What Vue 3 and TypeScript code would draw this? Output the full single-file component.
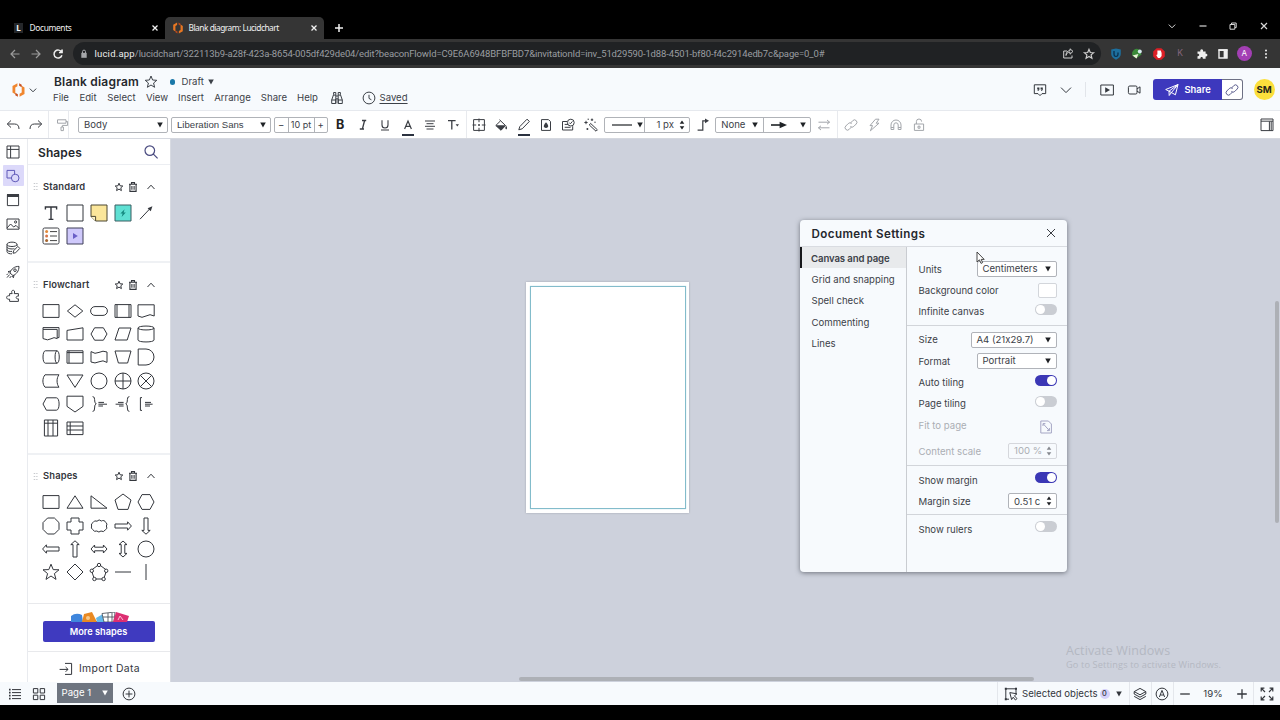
<script setup lang="ts">
import { h } from 'vue'

interface Glyph {
  d?: string
  f?: string
}

const ring = (x: number, y: number, r: number): string =>
  `M${x - r} ${y}a${r} ${r} 0 1 0 ${2 * r} 0a${r} ${r} 0 1 0 ${-2 * r} 0`

// All glyphs are drawn around the origin of a 20 x 20 box.
const glyphs: Record<string, Glyph> = {
  close: { d: 'M-2.5-2.5L2.5 2.5M2.5-2.5L-2.5 2.5' },
  plus: { d: 'M-4 0H4M0-4V4' },
  back: { d: 'M4.5 0H-4M0-4L-4 0L0 4' },
  forward: { d: 'M-4.5 0H4M0-4L4 0L0 4' },
  reload: { d: 'M3.6-1.8A4 4 0 1 0 3.9 1.2M4-4.4V-1.4H1', f: 'M4.4-4.6V-1H.8z' },
  padlock: { d: 'M-1.5-1V-2.4a1.5 1.5 0 0 1 3 0V-1', f: 'M-2.7-1.2H2.7V3.8H-2.7z' },
  shareOut: { d: 'M-1-3H-4.3V4H4V1.5M-2 1.5C-1.5-1 0-1.8 2-1.8V.2L5-2.6L2-5.2V-3.4C-1-3.2-2-1-2 1.5z' },
  star: { d: 'M0-4.6L1.3-1.5L4.6-1.3L2.1.9L2.9 4.2L0 2.4L-2.9 4.2L-2.1.9L-4.6-1.3L-1.3-1.5z' },
  bigStar: { d: 'M0-6L1.6-2L5.8-1.7L2.6 1L3.6 5.3L0 3L-3.6 5.3L-2.6 1L-5.8-1.7L-1.6-2z' },
  smallStar: { d: 'M0-3.8L1.1-1.2L3.8-1L1.8.8L2.4 3.6L0 2.1L-2.4 3.6L-1.8.8L-3.8-1L-1.1-1.2z' },
  puzzleSolid: { f: 'M-4.5-2.6H-1.6C-2.4-5.6 1.8-5.6 1-2.6H3.6V-.2C6-.8 6 3 3.6 2.4V4.8H.8C1.3 2.4-2 2.4-1.6 4.8H-4.5V2.2C-2.2 2.6-2.2-.6-4.5-.2z' },
  panelSolid: { d: 'M-4-4H4V4H-4z', f: 'M.6-4H4.2V4H.6zM-4.5-4.8H4.5V-3H-4.5z' },
  menuDots: { f: ring(0, -3.6, 1) + ring(0, 0, 1) + ring(0, 3.6, 1) },
  winMin: { d: 'M-3.5 0H3.5' },
  winRestore: { d: 'M-3-1.5H1.8V3.2H-3zM-1.5-1.7V-3H3.2V1.6H2' },
  winClose: { d: 'M-3-3L3 3M3-3L-3 3' },
  dialogClose: { d: 'M-4-4L4 4M4-4L-4 4' },
  chevDown: { d: 'M-3.2-1.4L0 1.8L3.2-1.4' },
  chevWide: { d: 'M-5-2.4L0 2.6L5-2.4' },
  chevUp: { d: 'M-3.5 2L0-1.8L3.5 2' },
  binoculars: { d: 'M-1-2H1M-1 .8H1M-1.2 5.5V-5.5H-3.4V-3.5L-5.3 2V5.5H-1.2V1M1.2 5.5V-5.5H3.4V-3.5L5.3 2V5.5H1.2V1M-5.3 2H-1.2M5.3 2H1.2M-3.6-2.9H-1.2M3.6-2.9H1.2' },
  clock: { d: ring(0, 0, 5.9) + 'M0-3.2V.4L2.4 1.8' },
  comment: { d: 'M-5.7-5.2H5.7V3.6H2L0 5.6L-2 3.6H-5.7z', f: 'M-2.8-2.6H-.6V-.6Q-.6.8-2.4 1.1V.3Q-1.6 0-1.6-.6H-2.8zM.6-2.6H2.8V-.6Q2.8.8 1 1.1V.3Q1.8 0 1.8-.6H.6z' },
  present: { d: 'M-6.2-5H6.4V5H-6.2z', f: 'M-1.8-2.8L3 0L-1.8 2.8z' },
  video: { d: 'M-4.2-4H1.8Q3-4 3-2.8V2.8Q3 4 1.8 4H-4.2Q-5.6 4-5.6 2.6V-2.6Q-5.6-4-4.2-4zM3-1L6-3.2V3.2L3 1' },
  plane: { d: 'M6-5.5L-6.3-.5L-3 1.2L3.4 4.8zM6-5.5L-3 1.2L-2.8 5.5L-.6 2.6M6-5.5L-.6 2.6' },
  link: { d: 'M-.4-2L1.8-4.4A2.4 2.4 0 0 1 5.2-1L2.8 1.4A2.4 2.4 0 0 1-.6 1.4M.4 2L-1.8 4.4A2.4 2.4 0 0 1-5.2 1L-2.8-1.4A2.4 2.4 0 0 1 .6-1.4' },
  undo: { d: 'M-2-4.5L-5.7-1L-2 2.5M-5.7-1H1.5Q6-1 6 4' },
  redo: { d: 'M2-4.5L5.7-1L2 2.5M5.7-1H-1.5Q-6-1-6 4' },
  roller: { d: 'M-4.5-5.2H4V-1.8H-4.5zM4-3.5H5.6V.4H.4V2M-1 2H1.4V5.6H-1z' },
  italic: { d: 'M-1-4.5H3.2M-3.2 4H1M1.6-4.5L-.6 4' },
  underline: { d: 'M-3-4.8V0A3 3 0 0 0 3 0V-4.8M-4 5H4' },
  fontColor: { d: 'M-3.4 4L0-4L3.4 4M-2.3 1.4H2.3' },
  align: { d: 'M-5-4H5M-3.5-1.3H3.5M-5 1.3H5M-3.5 4H3.5' },
  textMore: { d: 'M-5-4.3H2.6M-1.2-4.3V4.6', f: 'M2.6-.8H6L4.3 1.4z' },
  frame: { d: 'M-5.4-5.4H5.4V5.4H-5.4zM0-6.5V-2.8M0 6.5V2.8M-6.5 0H-2.8M6.5 0H2.8M-1 0H1M0-1V1' },
  bucket: { d: 'M-5.2.5L-.4-4.2L4.6.6L0 5.2zM-.4-4.2L-1.4-5.4', f: 'M-5.4.2H4.8L0 5.4zM5.2.8Q7 3.4 5.2 4.4Q3.4 3.4 5.2.8z' },
  pen: { d: 'M-5.2 4.8L-4.2 1.6L3-5.8L5.4-3.6L-1.8 3.8z' },
  drop: { d: 'M-4-5.4H2.5L4.5-3.4V5.4H-4.5V-5.4z', f: 'M0-2.8Q3 .6 2 2Q0 4-2 2Q-3 .6 0-2.8z' },
  card: { d: 'M-1-3.5H-5.5V5H4.7V1.2M-3.3-.6H0M-3.3 2.3H2.6' + ring(2.8, -2.4, 3.4) + 'M1.3-2.4L2.4-1.2L4.4-3.6' },
  wand: { d: 'M-1.7 0L5 6.2L6.4 4.8L-.4-1.6zM-5-4.2V-.8M-6.6-2.5H-3.4M1-6.5V-4M-.2-5.2H2.2M-2.8-6.4V-5M-3.6 3V5M-4.6 4H-2.6M4-3.4V-2' },
  elbow: { d: 'M-5.4 5.2H-.2V-4.2H4', f: 'M2-6.6L6-4.2L2-1.8z' },
  line: { d: 'M-10 0H10' },
  arrowRight: { d: 'M-8 0H2', f: 'M.6-3.2L8 0L.6 3.2z' },
  swap: { d: 'M-5.5-2.8H5.5M3-5L5.6-2.8L3-.8M5.5 2.8H-5.5M-3 .8L-5.6 2.8L-3 5' },
  bolt: { d: 'M1.5-5.8H5L2.2-1.8H5L-3.6 5.8L-1.5.6H-4z' },
  magnet: { d: 'M-5 4.5V0A5 5 0 0 1 5 0V4.5H2.2V0A2.2 2.2 0 0 0-2.2 0V4.5zM-5 2.5H-2.2M5 2.5H2.2' },
  lock: { d: 'M-4.6-1H4.6V5.4H-4.6zM-2.6-1V-3.4A2.6 2.6 0 0 1 2.6-3.4M-1 1.2H1V3.2H-1z' },
  dockRight: { d: 'M-6-6H6V5.6H-6zM2.4-3.6V5.6M4.2-3.6V5.6M-6-3.8H6' },
  layout: { d: 'M-6-6H6V6H-6zM-6-2.6H6M-2.4-6V6' },
  shapes: { d: 'M-2 2H-6V-5.6H1.6V-2' + ring(2.2, 2, 3.8) },
  container: { d: 'M-5.6-5.4H5.6V5.6H-5.6z', f: 'M-6-6H6V-3H-6z' },
  image: { d: 'M-6-5H6V5.2H-6zM-6 4L-2.4 0L.6 3L3 1.4L6 4.4' + ring(2.6, -2, 1.1) },
  database: { d: 'M-6-3.6C-6-6.6 4-6.6 4-3.6C4-.8-6-.8-6-3.6V3.6C-6 5.4-3 6-1 5.8M4-3.6V-2M-6-1.2C-6 .8-1 1.4 1.4.6M-6 1.4C-6 3.4-3 3.6-1 3.4M0 5.2L.6 2.8L4.8-1.6L6.8.4L2.6 4.8z' },
  rocket: { d: 'M-3 1C-2-3 1.6-5.8 6-5.6C6-1 3.6 2 0 3.6zM-2-1L-5-.4L-3.4 1M1 3L.4 5.8L-.6 4M-3.4 2.6L-6 5.6M-1.6 4L-3.4 6M-5 1.6L-6.4 3' + ring(2, -1.8, 1.3) },
  puzzle: { d: 'M-3.4-2.4H-.8C-3.2-6.8 3.4-6.8 1.2-2.4H5.4V.2C2.4-.4 2.4 3.4 5.4 2.8V5.4H-3.4V3.2C-7.4 4-7.4-1-3.4-.2z' },
  search: { d: ring(-1.2, -1.4, 4.8) + 'M2.4 2.2L6.6 6.4' },
  trash: { d: 'M-4-2.8H4M-3.1-2.8V4.4H3.1V-2.8M-1.5-2.8V-4.4H1.5V-2.8M-1.1-1V2.8M1.1-1V2.8' },
  importData: { d: 'M-6.4.4H2M-.4-2L2 .4L-.4 2.8M-1-5.6H5.6V5.4H-1' },
  list: { d: 'M-3-4.4H6M-3-1.4H6M-3 1.6H6M-3 4.6H6', f: 'M-6-5.2H-4.4V-3.6H-6zM-6-2.2H-4.4V-.6H-6zM-6 .8H-4.4V2.4H-6zM-6 3.8H-4.4V5.4H-6z' },
  grid: { d: 'M-5.6-5.4H-1.2V-1H-5.6zM1.2-5.4H5.6V-1H1.2zM-5.6 1.2H-1.2V5.6H-5.6zM1.2 1.2H5.6V5.6H1.2z' },
  addPage: { d: ring(0, 0, 5.9) + 'M-3.4 0H3.4M0-3.4V3.4' },
  selection: { d: 'M5-1V-5.2H-5.2V5.2H-2M-1.2-1.4L6-.2L3.4 1.8L6 4.6L4.4 6L2.2 3.2L.6 5.6z', f: 'M-6.2-6.2H-4.2V-4.2H-6.2zM4-6.2H6V-4.2H4zM-6.2 4.2H-4.2V6.2H-6.2z' },
  layers: { d: 'M0-5.6L5.8-2.4L0 .8L-5.8-2.4zM-5.8 0L0 3.2L5.8 0M-5.8 2.4L0 5.6L5.8 2.4M-5.8-2.4V0M5.8-2.4V0' },
  accessible: { d: ring(0, 0, 5.9) + 'M-2.6 3L0-3.6L2.6 3M-1.7 1H1.7' },
  minus: { d: 'M-4.8 0H4.8' },
  zoomIn: { d: 'M-4.8 0H4.8M0-4.8V4.8' },
  expand: { d: 'M-2-2L-5.8-5.8M-5.8-2.6V-5.8H-2.6M2-2L5.8-5.8M5.8-2.6V-5.8H2.6M-2 2L-5.8 5.8M-5.8 2.6V5.8H-2.6M2 2L5.8 5.8M5.8 2.6V5.8H2.6' },
  fitPage: { d: 'M-5.2-6H2.4L5.4-3V6H-5.2zM-2.6-3L3.2 3.4M-3-1V-3.4H-.6M3.4 1V3.6H1' },
  caret: { f: 'M-2.8-2.4H2.8L0 2.4z' },
  spinner: { f: 'M-2.3-1.2L0-4.4L2.3-1.2zM-2.3 1.2H2.3L0 4.4z' },
  // standard library
  text: { d: 'M-5.6-3.4V-6H5.6V-3.4M0-6V6.4M-2.4 6.4H2.4' },
  box: { d: 'M-8-8H8V8H-8z' },
  diagonal: { d: 'M-6 6.2L4-4.4', f: 'M6.4-6.8L4.8-1.8L1.6-4.8z' },
  // flowchart library
  process: { d: 'M-8-6.4H8V6.4H-8z' },
  decision: { d: 'M-7.6 0L0-6.2L7.8 0L0 6.2z' },
  terminator: { d: 'M-4-4.4H4A4.4 4.4 0 0 1 4 4.4H-4A4.4 4.4 0 0 1-4-4.4z' },
  predefined: { d: 'M-8-6.4H8V6.4H-8zM-6-6.4V6.4M6-6.4V6.4' },
  document: { d: 'M-8-6.2H8.2V5Q4 2.4 0 5T-8 5z' },
  documents: { d: 'M-8-4.6H6.2V4.6Q3 2.6 0 4.8T-8 4.6zM-8-4.6V-6.4H8V3.6H6.4' },
  manualInput: { d: 'M-8-3.6L8-6.2V6H-8z' },
  hexagon: { d: 'M-8 0L-4.4-6.2H4.4L8 0L4.4 6.2H-4.4z' },
  data: { d: 'M-4-6H8L4.2 6H-8z' },
  cylinder: { d: 'M-8-6C-8-8.6 8-8.6 8-6V6C8 8.6-8 8.6-8 6zM-8-6C-8-3.4 8-3.4 8-6' },
  directData: { d: 'M-5.6-6.2H6C9-6.2 9 6.2 6 6.2H-5.6C-8.8 6.2-8.8-6.2-5.6-6.2M6-6.2C3.4-6.2 3.4 6.2 6 6.2' },
  storage: { d: 'M-8-6.2H8V6.2H-8zM-6-6.2V6.2M-8-4.4H8' },
  tape: { d: 'M-8-5.4Q-4-2.4 0-4.6T8-5V5.4Q4 2.6 0 4.8T-8 5z' },
  manualOp: { d: 'M-8-6H8L4.6 6H-4.6z' },
  delay: { d: 'M-7.8-8H0A8 8 0 0 1 0 8H-7.8z' },
  stored: { d: 'M-6-6.2H8C5.4-3 5.4 3 8 6.2H-6C-8.8 3-8.8-3-6-6.2z' },
  merge: { d: 'M-8-6H8L0 6.4z' },
  circle: { d: ring(0, 0, 8) },
  orGate: { d: ring(0, 0, 8) + 'M-8 0H8M0-8V8' },
  junction: { d: ring(0, 0, 8) + 'M-5.6-5.6L5.6 5.6M5.6-5.6L-5.6 5.6' },
  display: { d: 'M-4.6-6.2H5.4C9-6.2 9 6.2 5.4 6.2H-4.6L-8 0z' },
  offPage: { d: 'M-8-7.8H8V2.4L0 8L-8 2.4z' },
  braceRight: { d: 'M-6.4-7.4Q-4.2-7.4-4.4-4.4T-2.8 0Q-4.6.4-4.4 4T-6.4 7.4M-.6-1.6H5M-.6.2H8M-.6 2H4' },
  braceLeft: { d: 'M6.4-7.4Q4.2-7.4 4.4-4.4T2.8 0Q4.6.4 4.4 4T6.4 7.4M.6-1.6H-5M.6.2H-7.4M.6 2H-4' },
  bracket: { d: 'M-4-6.4H-5.6V6.4H-4M-1-1.6H5M-1 .2H6.6M-1 2H4' },
  tableCols: { d: 'M-6.6-8H6.6V8H-6.6zM-6.6-4.8H6.6M-3-8V8M2-8V8' },
  tableRows: { d: 'M-8-6H8V6.6H-8zM-4.8-6V6.6M-8-2H8M-8 2H8' },
  // geometric library
  triangle: { d: 'M0-6.2L8 6.2H-8z' },
  rightTriangle: { d: 'M-8-6.2V6.2H8z' },
  pentagon: { d: 'M0-8L8-2L5 7.4H-5L-8-2z' },
  hexagonTall: { d: 'M-8 0L-4-7.4H4L8 0L4 7.4H-4z' },
  octagon: { d: 'M-3.4-8H3.4L8-3.4V3.4L3.4 8H-3.4L-8 3.4V-3.4z' },
  cross: { d: 'M-4-8H4V-4H8V4H4V8H-4V4H-8V-4H-4z' },
  cloud: { d: 'M-6-3.4A3 3 0 0 1-2-4.8A3 3 0 0 1 2.4-5A3 3 0 0 1 6.8-3.6A2.6 2.6 0 0 1 7.4 0A2.8 2.8 0 0 1 6.2 4A3 3 0 0 1 2 5A3 3 0 0 1-2.2 5A3 3 0 0 1-6.2 3.6A2.8 2.8 0 0 1-7.4 0A2.6 2.6 0 0 1-6-3.4z' },
  blockRight: { d: 'M-8-2H4.6V-4.2L8.4 0L4.6 4.2V2H-8z' },
  blockLeft: { d: 'M8-2H-4.6V-4.2L-8.4 0L-4.6 4.2V2H8z' },
  blockDown: { d: 'M-2-8H2V4.4H4.2L0 8.2L-4.2 4.4H-2z' },
  blockUp: { d: 'M-2 8H2V-4.4H4.2L0-8.2L-4.2-4.4H-2z' },
  blockH: { d: 'M-8 0L-4.4-4V-1.8H4.4V-4L8 0L4.4 4V1.8H-4.4V4z' },
  blockV: { d: 'M0-8L-4-4.4H-1.8V4.4H-4L0 8L4 4.4H1.8V-4.4H4z' },
  starShape: { d: 'M0-7.8L2.2-2.4L8-2.2L3.4 1.6L5 7.4L0 4L-5 7.4L-3.4 1.6L-8-2.2L-2.2-2.4z' },
  diamond: { d: 'M0-8L8 0L0 8L-8 0z' },
  nodes: { d: 'M-1.5-6.4L-6.6-2.6M1.5-6.4L6.6-2.6M-7 .2L-5.2 5.4M7 .2L5.2 5.4M-3 7H3' + ring(0, -7, 1.7) + ring(-7.2, -1.2, 1.7) + ring(7.2, -1.2, 1.7) + ring(-4.6, 7, 1.7) + ring(4.6, 7, 1.7) },
  hLine: { d: 'M-8 0H8' },
  vLine: { d: 'M0-8V8' },
}

const Icon = (props: { name: string; w?: number }) =>
  h('svg', { viewBox: '-10 -10 20 20', width: 20, height: 20, overflow: 'visible', 'aria-hidden': 'true' }, [
    h('path', { d: glyphs[props.name].d ?? '', fill: 'none', stroke: 'currentColor', 'stroke-width': props.w ?? 1 }),
    h('path', { d: glyphs[props.name].f ?? '', fill: 'currentColor' }),
  ])
Icon.props = ['name', 'w']

const menus = [
  { label: 'File', width: 25 },
  { label: 'Edit', width: 29 },
  { label: 'Select', width: 38 },
  { label: 'View', width: 33 },
  { label: 'Insert', width: 35 },
  { label: 'Arrange', width: 48 },
  { label: 'Share', width: 35 },
  { label: 'Help', width: 32 },
]
const rail = ['layout', 'shapes', 'container', 'image', 'database', 'rocket', 'puzzle']
const flowchart = [
  'process', 'decision', 'terminator', 'predefined', 'document',
  'documents', 'manualInput', 'hexagon', 'data', 'cylinder',
  'directData', 'storage', 'tape', 'manualOp', 'delay',
  'stored', 'merge', 'circle', 'orGate', 'junction',
  'display', 'offPage', 'braceRight', 'braceLeft', 'bracket',
  'tableCols', 'tableRows',
]
const geometric = [
  'process', 'triangle', 'rightTriangle', 'pentagon', 'hexagonTall',
  'octagon', 'cross', 'cloud', 'blockRight', 'blockDown',
  'blockLeft', 'blockUp', 'blockH', 'blockV', 'circle',
  'starShape', 'diamond', 'nodes', 'hLine', 'vLine',
]
const libraries = [
  { title: 'Standard', key: 'standard', shapes: [] as string[] },
  { title: 'Flowchart', key: 'flowchart', shapes: flowchart },
  { title: 'Shapes', key: 'geometric', shapes: geometric },
]
const settingsTabs = ['Canvas and page', 'Grid and snapping', 'Spell check', 'Commenting', 'Lines']

type Control = 'select' | 'wide' | 'swatch' | 'off' | 'on' | 'fit' | 'number'
interface Setting {
  label: string
  control: Control
  value?: string
  muted?: boolean
  spaced?: boolean
}
const settings: Setting[][] = [
  [
    { label: 'Units', control: 'select', value: 'Centimeters' },
    { label: 'Background color', control: 'swatch' },
    { label: 'Infinite canvas', control: 'off' },
  ],
  [
    { label: 'Size', control: 'wide', value: 'A4 (21x29.7)' },
    { label: 'Format', control: 'select', value: 'Portrait' },
    { label: 'Auto tiling', control: 'on' },
    { label: 'Page tiling', control: 'off' },
    { label: 'Fit to page', control: 'fit', muted: true },
    { label: 'Content scale', control: 'number', value: '100 %', muted: true, spaced: true },
  ],
  [
    { label: 'Show margin', control: 'on' },
    { label: 'Margin size', control: 'number', value: '0.51 c' },
  ],
  [{ label: 'Show rulers', control: 'off' }],
]
</script>

<template>
  <div class="screen">
    <div class="tabstrip">
      <div class="tab">
        <span class="fav-doc">L</span>
        <span class="tab-title">Documents</span>
        <Icon name="close" :w="1.3" />
      </div>
      <div class="tab active">
        <svg class="logo small" viewBox="0 0 14 14"><path d="M6 .6L1.4 3.2V9.4L4 11V4.6L6 3.4zM8 13.4L12.6 10.8V4.6L10 3V9.4L8 10.6z" fill="#e87722" /><path d="M7.6 .6L10 2V4.4L7.6 3zM6.4 13.4L4 12V9.6L6.4 11z" fill="#b9481c" /></svg>
        <span class="tab-title">Blank diagram: Lucidchart</span>
        <Icon name="close" :w="1.3" />
      </div>
      <Icon name="plus" :w="1.5" class="new-tab" />
      <div class="window-buttons">
        <Icon name="chevDown" /><Icon name="winMin" :w="1.2" /><Icon name="winRestore" /><Icon name="winClose" :w="1.2" />
      </div>
    </div>

    <div class="addressbar">
      <div class="nav-buttons">
        <Icon name="back" class="dim" :w="1.2" /><Icon name="forward" class="dim" :w="1.2" /><Icon name="reload" :w="1.5" />
      </div>
      <div class="url">
        <Icon name="padlock" class="pad" />
        <span class="url-text"><b>lucid.app</b>/lucidchart/322113b9-a28f-423a-8654-005df429de04/edit?beaconFlowId=C9E6A6948BFBFBD7&amp;invitationId=inv_51d29590-1d88-4501-bf80-f4c2914edb7c&amp;page=0_0#</span>
        <span class="url-actions"><Icon name="shareOut" /><Icon name="star" :w="1.2" /></span>
      </div>
      <div class="extensions">
        <svg viewBox="-10 -10 20 20"><path d="M0-5.4L4.8-4.4V0Q4.6 3.6 0 5.8Q-4.6 3.6-4.8 0V-4.4z" fill="#1d6f9e" /><path d="M-2-3V0Q-2 2.4 0 2.4T2 0V-1.4" fill="none" stroke="#0b2f4d" stroke-width="1.3" /></svg>
        <svg viewBox="-10 -10 20 20"><path d="M-5 1A5 5 0 0 1 2-4.6L4.6.4L-1 4.6z" fill="#3b8a3a" /><path d="M-4.6 1.4L1.4 0L-.4 4.6z" fill="#e9f3d8" /><circle cx="2.8" cy="-2.4" r="2" fill="#d7ebf0" /></svg>
        <svg viewBox="-10 -10 20 20"><path d="M-2.4-5.8H2.4L5.8-2.4V2.4L2.4 5.8H-2.4L-5.8 2.4V-2.4z" fill="#dc1f26" /><path d="M-1.6-3.6H1.8L2.6-1V2L1 4H-1L-2.8 1L-1.6 .4z" fill="#fff" /></svg>
        <span class="ext-k">K</span>
        <Icon name="puzzleSolid" /><Icon name="panelSolid" :w="1.4" />
        <span class="profile">A</span>
        <Icon name="menuDots" />
      </div>
    </div>

    <header class="header">
      <div class="brand">
        <svg class="logo" viewBox="0 0 14 14"><path d="M6 .6L1.4 3.2V9.4L4 11V4.6L6 3.4zM8 13.4L12.6 10.8V4.6L10 3V9.4L8 10.6z" fill="#f0862f" /><path d="M7.6 .6L10 2V4.4L7.6 3zM6.4 13.4L4 12V9.6L6.4 11z" fill="#c8511f" /></svg>
        <Icon name="chevDown" />
      </div>
      <div class="doc">
        <div class="title-row">
          <h1>Blank diagram</h1>
          <Icon name="bigStar" />
          <i class="status-dot"></i>
          <span class="draft">Draft</span>
          <Icon name="caret" class="draft-caret" />
        </div>
        <nav class="menu-row">
          <span v-for="m in menus" :key="m.label" class="menu" :style="{ width: m.width + 'px' }">{{ m.label }}</span>
          <Icon name="binoculars" class="binoc" />
          <Icon name="clock" class="clock" />
          <span class="saved">Saved</span>
        </nav>
      </div>
      <div class="header-actions">
        <Icon name="comment" /><Icon name="chevWide" class="chev" />
        <i class="vline"></i>
        <Icon name="present" /><Icon name="video" class="video" />
        <div class="share"><Icon name="plane" /><span>Share</span></div>
        <div class="share-link"><Icon name="link" /></div>
        <span class="avatar">SM</span>
      </div>
    </header>

    <div class="toolbar">
      <div class="group g-undo"><Icon name="undo" class="slot" /><Icon name="redo" class="slot" /></div>
      <div class="group g-paint"><Icon name="roller" class="faded" /></div>
      <div class="group g-text">
        <div class="field f-body"><span>Body</span><Icon name="caret" /></div>
        <div class="field f-font"><span>Liberation Sans</span><Icon name="caret" /></div>
        <div class="field f-size"><span>−</span><span class="size">10 pt</span><span>+</span></div>
        <b class="cell bold">B</b>
        <span class="cell"><Icon name="italic" :w="1.3" /></span>
        <span class="cell"><Icon name="underline" :w="1.1" /></span>
        <span class="cell swatched"><Icon name="fontColor" :w="1.2" /></span>
        <span class="cell"><Icon name="align" /></span>
        <span class="cell"><Icon name="textMore" :w="1.3" /></span>
      </div>
      <div class="group g-style">
        <span class="cell"><Icon name="frame" /></span>
        <span class="cell"><Icon name="bucket" /></span>
        <span class="cell swatched"><Icon name="pen" /></span>
        <span class="cell"><Icon name="drop" /></span>
        <span class="cell"><Icon name="card" /></span>
        <span class="cell"><Icon name="wand" /></span>
        <div class="field f-line">
          <span class="part line-style"><Icon name="line" :w="1.2" /><Icon name="caret" class="mini" /></span>
          <span class="part line-width"><span>1 px</span><Icon name="spinner" /></span>
        </div>
        <span class="cell elbow"><Icon name="elbow" :w="1.2" /></span>
        <div class="field f-ends">
          <span class="part none"><span>None</span><Icon name="caret" /></span>
          <span class="part arrow"><Icon name="arrowRight" :w="1.6" /><Icon name="caret" /></span>
        </div>
        <span class="cell swap faded"><Icon name="swap" /></span>
      </div>
      <div class="group g-lock faded">
        <span class="cell"><Icon name="link" /></span>
        <span class="cell"><Icon name="bolt" /></span>
        <span class="cell"><Icon name="magnet" /></span>
        <span class="cell"><Icon name="lock" /></span>
      </div>
      <Icon name="dockRight" class="dock" />
    </div>

    <main class="workspace">
      <aside class="rail">
        <span v-for="r in rail" :key="r" class="rail-item" :class="{ current: r === 'shapes' }"><Icon :name="r" /></span>
      </aside>

      <aside class="panel">
        <div class="panel-head"><h2>Shapes</h2><Icon name="search" :w="1.2" /></div>
        <section v-for="lib in libraries" :key="lib.key" class="library" :class="lib.key">
          <div class="lib-head">
            <i class="grip"></i>
            <h3>{{ lib.title }}</h3>
            <Icon name="smallStar" /><Icon name="trash" class="bin" :w="1.1" /><Icon name="chevUp" class="fold" />
          </div>
          <div class="shape-grid">
            <template v-if="lib.key === 'standard'">
              <Icon name="text" :w="1.4" />
              <Icon name="box" />
              <svg viewBox="-10 -10 20 20"><path d="M-8-8H8V8H-3.4L-8 3.4z" fill="#fbe69a" stroke="#4b4632" /><path d="M-8 3.4H-3.4V8" fill="#fff6c9" stroke="#4b4632" /></svg>
              <svg viewBox="-10 -10 20 20"><path d="M-8-8H8V8H-8z" fill="#5fe0d3" stroke="#3a5f63" /><path d="M1.6-3.8L-2.6.6H-.4L-1.4 4L2.8-.6H.6z" fill="#14877e" /></svg>
              <Icon name="diagonal" />
              <svg viewBox="-10 -10 20 20"><rect x="-8" y="-8" width="16" height="16" rx="1.6" fill="#fff" stroke="#3f4147" /><path d="M-1-4.4H6M-1 0H6M-1 4.6H6" stroke="#444" /><circle cx="-4.4" cy="-4.4" r="1.5" fill="#e28a3c" /><circle cx="-4.4" cy="0" r="1.5" fill="#d9764a" /><circle cx="-4.4" cy="4.6" r="1.5" fill="#a7662f" /></svg>
              <svg viewBox="-10 -10 20 20"><path d="M-8-8H8V8H-8z" fill="#cfc9fb" stroke="#3f3f58" /><path d="M-2-3L2.8 0L-2 3z" fill="#6a5fc7" /></svg>
            </template>
            <Icon v-for="(s, i) in lib.shapes" :key="i" :name="s" />
          </div>
        </section>
        <div class="more">
          <svg class="more-art" viewBox="0 0 60 10"><path d="M1 4Q6 0 12 3L13 10H1z" fill="#3f86dd" /><path d="M14 2L22 0L27 10H12z" fill="#e98a23" /><circle cx="18" cy="6" r="2" fill="#f7c98b" /><path d="M26 6L33 2L35 10H27z" fill="#62b8ea" /><path d="M32 1.5L45 0L44 10H34zM33 5H44M38 1V10M42 1V10" fill="#fff" stroke="#3d4652" stroke-width=".8" /><path d="M46 0L59 4L57 10H43z" fill="#dc2f72" /><path d="M48 8L50 4L53 8" fill="none" stroke="#fbc0d6" /></svg>
          <button>More shapes</button>
        </div>
        <div class="import"><Icon name="importData" /><span>Import Data</span></div>
      </aside>

      <section class="canvas">
        <div class="page"><div class="margin"></div></div>
        <div class="watermark"><p>Activate Windows</p><small>Go to Settings to activate Windows.</small></div>
        <i class="scroll-h"></i><i class="scroll-v"></i>

        <div class="dialog">
          <div class="dialog-head"><h2>Document Settings</h2><Icon name="dialogClose" class="dialog-close" /></div>
          <div class="dialog-body">
            <div class="dialog-tabs">
              <span v-for="(t, i) in settingsTabs" :key="t" :class="{ selected: i === 0 }">{{ t }}</span>
            </div>
            <div class="dialog-main">
              <div v-for="(block, b) in settings" :key="b" class="block">
                <div v-for="s in block" :key="s.label" class="row" :class="{ muted: s.muted, spaced: s.spaced }">
                  <label>{{ s.label }}</label>
                  <span v-if="s.control === 'select' || s.control === 'wide'" class="drop" :class="s.control"><em>{{ s.value }}</em><Icon name="caret" /></span>
                  <span v-else-if="s.control === 'number'" class="drop number"><em>{{ s.value }}</em><Icon name="spinner" /></span>
                  <span v-else-if="s.control === 'swatch'" class="swatch"></span>
                  <Icon v-else-if="s.control === 'fit'" name="fitPage" class="fit" />
                  <span v-else class="toggle" :class="s.control"><i></i></span>
                </div>
              </div>
            </div>
          </div>
        </div>
        <svg class="cursor" viewBox="0 0 10 14"><path d="M1 1V11L3.4 8.8L5 12.4L6.6 11.6L5.2 8.4H8.2z" fill="#fff" stroke="#333" stroke-width=".9" /></svg>
      </section>
    </main>

    <footer class="footer">
      <Icon name="list" class="f-list" /><Icon name="grid" class="f-grid" />
      <div class="page-tab"><span>Page 1</span><Icon name="caret" /></div>
      <Icon name="addPage" class="f-add" />
      <div class="foot-right">
        <div class="seg s-sel"><Icon name="selection" /><span>Selected objects</span><b>0</b><Icon name="caret" class="sel-caret" /></div>
        <div class="seg s-icon"><Icon name="layers" /></div>
        <div class="seg s-icon"><Icon name="accessible" /></div>
        <div class="seg s-zoom"><Icon name="minus" :w="1.3" /><span>19%</span><Icon name="zoomIn" :w="1.3" /></div>
        <div class="seg s-full"><Icon name="expand" :w="1.2" /></div>
      </div>
    </footer>
  </div>
</template>

<style>
html,
body {
  background: #000;
  overflow: hidden;
}
</style>

<style scoped>
.screen {
  width: 1280px;
  height: 720px;
  background: #000;
  display: flex;
  flex-direction: column;
  overflow: hidden;
  font-family: Inter, "Liberation Sans", sans-serif;
  font-size: 9.6px;
  font-feature-settings: "calt" 0;
  color: #3c4148;
  line-height: 1;
  white-space: nowrap;
}
.screen * { box-sizing: border-box; }
h1, h2, h3, p { margin: 0; }
em { font-style: normal; }
svg { flex: none; display: block; }

/* browser chrome */
.tabstrip {
  flex: none;
  height: 39px;
  padding-top: 17px;
  display: flex;
  color: #f1f1f1;
  font-family: "Noto Sans", sans-serif;
  font-size: 8.4px;
}
.tab { width: 165px; height: 22px; display: flex; align-items: center; padding-left: 14px; }
.tab.active { width: 159px; background: #353535; border-radius: 5px 5px 0 0; padding-left: 7px; }
.tab-title { flex: 1; letter-spacing: -0.45px; }
.tab:first-child > svg { margin-right: 0.5px; }
.tab:first-child .tab-title { letter-spacing: -0.35px; }
.fav-doc { width: 9px; height: 10px; background: #25272a; color: #fff; font-size: 8px; font-weight: 700; text-align: center; line-height: 10px; margin-right: 6.5px; }
.logo { width: 15px; height: 16px; }
.logo.small { width: 12px; height: 12px; margin-right: 4.5px; }
.tab.active .tab-title { letter-spacing: -0.5px; }
.new-tab { margin: 1px 0 0 5px; }
.window-buttons { margin-left: auto; display: flex; gap: 10.6px; padding: 0 6px 0 0; margin-top: -1px; color: #d8d8d8; }
.addressbar { flex: none; height: 29px; background: #353535; display: flex; align-items: center; padding-top: 0; color: #eee; }
.nav-buttons { display: flex; gap: 1.6px; width: 73px; padding-left: 4.5px; }
.dim { color: #9b9b9b; }
.url { width: 1028px; height: 23px; border-radius: 12px; background: #202224; display: flex; align-items: center; font-family: Roboto, sans-serif; }
.pad { color: #a5a7aa; margin-left: 1px; }
.url-text { color: #9a9da1; font-size: 9.5px; letter-spacing: -0.128px; margin-left: 0.5px; }
.url-text b { color: #eceded; font-weight: 400; letter-spacing: 0.2px; }
.url-actions { display: flex; gap: 1.5px; margin-left: auto; margin-right: 2px; color: #cfcfcf; }
.extensions { display: flex; align-items: center; padding-left: 5px; gap: 1.4px; }
.extensions > svg { width: 20px; height: 20px; }
.ext-k { width: 20px; text-align: center; color: #84667e; font-size: 8.6px; }
.profile { width: 15px; height: 15px; margin: 0 2.5px; border-radius: 50%; background: #a33fb4; color: #fff; text-align: center; line-height: 15px; font-size: 8px; }

/* document header */
.header { flex: none; height: 43px; background: #f7fafd; display: flex; border-bottom: 1px solid #e6e9ee; }
.brand { width: 54px; display: flex; align-items: center; padding: 1px 0 0 11px; }
.brand > svg:last-child { margin-left: -3px; }
.doc { display: flex; flex-direction: column; padding-top: 4px; }
.title-row { height: 20px; display: flex; align-items: center; }
h1 { width: 87px; font-size: 12px; font-weight: 600; letter-spacing: 0.2px; color: #25282d; }
.status-dot { width: 5.5px; height: 5.5px; border-radius: 50%; background: #1a78a8; margin: 0 6.5px 0 8.5px; }
.draft { width: 20px; }
.draft-caret { margin-left: -1px; }
.menu-row { height: 12px; display: flex; align-items: center; margin-left: -5.5px; }
.menu { text-align: center; }
.binoc { margin-left: 3px; }
.clock { margin-left: 12px; }
.saved { margin-left: 1px; text-decoration: underline; text-underline-offset: 1.5px; }
.header-actions { margin-left: auto; display: flex; align-items: center; color: #33373d; padding-top: 1px; }
.chev { margin-left: 6.5px; }
.vline { width: 1px; height: 15px; background: #e2e5ea; margin: 0 11px 0 8.5px; }
.video { margin: 0 9px 0 7px; }
.share { width: 69px; height: 21px; background: #3d38bd; border-radius: 3px 0 0 3px; color: #fff; display: flex; align-items: center; padding-left: 9px; font-weight: 600; font-size: 9.4px; }
.share span { margin-left: 3px; }
.share-link { width: 21px; height: 21px; border: 1px solid #6d7084; border-left: 0; border-radius: 0 3px 3px 0; background: #fff; display: grid; place-items: center; color: #5d5f8f; }
.avatar { width: 21px; height: 21px; border-radius: 50%; background: #fbdf3c; color: #26251a; font-size: 9.6px; font-weight: 700; text-align: center; line-height: 21px; margin: 0 5.5px 0 11px; }

/* formatting toolbar */
.toolbar { flex: none; height: 28px; background: #fff; display: flex; align-items: center; border-bottom: 1px solid #d5d8df; color: #3a3d43; }
.group { height: 100%; display: flex; align-items: center; border-right: 1px solid #e8eaee; }
.g-undo { width: 49px; padding-left: 3px; gap: 3px; }
.g-paint { width: 20px; padding-left: 3px; }
.g-text { width: 398px; padding-left: 9px; }
.g-style { width: 371px; padding-left: 1px; }
.g-lock { border-right: 0; padding-left: 2px; }
.faded { color: #a3a6ab; }
.field { height: 16px; border: 1px solid #b0b3b8; border-radius: 2px; display: flex; align-items: center; color: #3c4148; background: #fff; }
.field svg { color: #1f2226; }
.f-body { width: 90px; padding-left: 5px; justify-content: space-between; margin-right: 3px; }
.f-body svg, .f-font svg { margin-right: -3px; }
.f-font { width: 100px; padding-left: 5px; justify-content: space-between; margin-right: 3px; font-family: "Liberation Sans", sans-serif; }
.f-size { width: 54px; margin-right: 1px; }
.f-size span { flex: 1; text-align: center; }
.f-size .size { flex: none; width: 27px; height: 100%; line-height: 14px; border: solid #b0b3b8; border-width: 0 1px; font-size: 9px; }
.cell { width: 22.5px; height: 22px; display: flex; align-items: center; justify-content: center; position: relative; }
.bold { font-size: 12.5px; font-weight: 700; color: #222; padding-top: 1.5px; }
.swatched::after { content: ""; position: absolute; left: 5px; bottom: 0; width: 12px; height: 2px; background: #2b3240; }
.f-line { width: 86px; margin-left: 2.5px; }
.part { display: flex; align-items: center; height: 100%; }
.part + .part { border-left: 1px solid #b0b3b8; }
.line-style { width: 39px; padding-left: 7px; }
.line-style .mini { margin-left: -2px; }
.line-width { padding-left: 11px; }
.line-width svg { margin-left: -2px; }
.elbow { width: 25px; }
.f-ends { width: 96px; }
.none { width: 47px; padding-left: 5px; }
.none svg { margin-left: 0; }
.arrow { padding-left: 5px; }
.arrow svg:last-child { margin-left: 4px; }
.swap { width: 26px; }
.dock { margin: 0 3.5px 0 auto; }

/* workspace */
.workspace { flex: none; height: 543px; display: flex; }
.rail { width: 28px; background: #fff; border-right: 1.5px solid #e9ebef; padding-top: 2px; color: #3a3d43; }
.rail-item { width: 21px; height: 21px; margin: 0 0 3px 2.5px; display: grid; place-items: center; border-radius: 1px; }
.rail-item.current { background: #dcd9fa; color: #5f59b8; }
.panel { width: 143px; background: #fff; border-right: 1px solid #d8dbe2; display: flex; flex-direction: column; color: #33363c; }
.panel-head { flex: none; height: 26px; display: flex; align-items: center; justify-content: space-between; padding: 2px 9px 0 10px; border-bottom: 1px solid #eceef2; }
.panel-head svg { color: #4a4b80; margin-top: -1px; }
h2 { font-size: 12px; font-weight: 600; color: #25282d; letter-spacing: 0.1px; }
.library { flex: none; border-bottom: 2px solid #eff1f4; padding-top: 11px; }
.library.standard { height: 98px; }
.library.flowchart { height: 191.5px; }
.library.geometric { height: 149px; border-bottom-width: 1px; border-color: #e8e9ec; }
.lib-head { display: flex; align-items: center; height: 21px; }
.grip { width: 5px; height: 9px; margin: 0 5px 0 5px; background: radial-gradient(circle, #b9bcc1 0.7px, transparent 0.9px) 0 0 / 2.6px 3px; }
h3 { width: 66px; font-size: 9.4px; font-weight: 600; color: #33363c; letter-spacing: 0.15px; }
.bin { margin-left: -6.5px; }
.fold { margin-left: -1.5px; }
.shape-grid { display: grid; grid-template-columns: repeat(5, 23.75px); grid-auto-rows: 23.4px; padding: 4px 0 0 11.5px; place-items: center; }
.shape-grid > svg { width: 20px; height: 20px; overflow: visible; }
.more { flex: none; height: 48.5px; padding: 8px 0 0 14.5px; border-bottom: 1px solid #e8e9ec; }
.more-art { width: 60px; height: 10px; margin: 0 0 -1px 27px; }
.more button { display: block; width: 112px; height: 21px; border: 0; border-radius: 2px; background: #3f3abf; color: #fff; font: 600 9.2px Inter, sans-serif; padding: 0; letter-spacing: 0; }
.import { flex: 1; display: flex; align-items: center; padding: 4px 0 0 28px; font-size: 10.4px; letter-spacing: 0.3px; }
.import span { margin-left: 3px; }

/* canvas */
.canvas { flex: 1; background: #cdd1dc; position: relative; overflow: hidden; }
.page { position: absolute; left: 355px; top: 143px; width: 163px; height: 231px; background: #fff; padding: 3.5px 3px 4px 3.5px; box-shadow: 0 0 2px #9ea3ae; }
.margin { height: 100%; border: 1px solid #83bccb; box-shadow: 0 0 1px #a9d3df; }
.watermark { position: absolute; left: 895px; top: 505px; font-family: "Open Sans", sans-serif; color: #b4b8c2; }
.watermark p { font-size: 12.5px; line-height: 13px; letter-spacing: 0.1px; }
.watermark small { display: block; font-size: 9.2px; line-height: 16px; letter-spacing: 0.13px; }
.scroll-h { position: absolute; left: 348px; top: 538px; width: 515px; height: 4px; border-radius: 2px; background: #adb0b6; }
.scroll-v { position: absolute; right: 1px; top: 162px; width: 4px; height: 222px; border-radius: 2px; background: #adb0b6; }

/* settings dialog */
.dialog { position: absolute; left: 629px; top: 81px; width: 267px; height: 352px; background: #f7fafd; border-radius: 4px; box-shadow: 0 1px 5px #70747e; display: flex; flex-direction: column; overflow: hidden; }
.dialog-head { height: 27px; display: flex; align-items: center; padding: 0 6px 0 11.5px; justify-content: space-between; border-bottom: 1px solid #d9dce1; }
.dialog-head h2 { font-size: 11.6px; letter-spacing: 0.42px; padding-top: 3px; }
.dialog-close { color: #3a3d43; }
.dialog-body { flex: 1; display: flex; }
.dialog-tabs { width: 107px; border-right: 1px solid #c9ccd1; display: flex; flex-direction: column; letter-spacing: 0; }
.dialog-tabs span { height: 21.4px; display: flex; align-items: center; padding: 1.5px 0 0 11.5px; }
.dialog-tabs .selected { background: #e8eaec; border-left: 2.5px solid #17181b; padding-left: 9px; font-weight: 600; letter-spacing: -0.1px; }
.dialog-main { flex: 1; }
.block { border-bottom: 1.5px solid #d2d5da; padding: 3px 10.5px 2.5px 11.5px; }
.block:first-child { padding-top: 11px; }
.block:nth-child(2) { padding-bottom: 3.5px; }
.block:last-child { border: 0; }
.row { height: 21.4px; display: flex; align-items: center; justify-content: space-between; letter-spacing: 0; }
.row.spaced { margin-top: 4.5px; }
.row label { padding-top: 1.5px; }
.muted { color: #abaeb4; }
.drop { height: 16px; border: 1px solid #b0b3b9; border-radius: 2px; background: #fff; display: flex; align-items: center; justify-content: space-between; padding-left: 5px; margin-top: 0.5px; }
.drop svg { margin-right: -2px; color: #1d1f23; }
.select { width: 80px; }
.select em { flex: 1; width: 0; }
.wide { width: 86px; }
.number { width: 48.5px; }
.number svg { margin-left: -10px; margin-right: -3px; }
.muted .drop { border-color: #d5d7dc; background: transparent; }
.muted .drop svg { color: #85888e; }
.swatch { width: 19px; height: 15px; border: 1px solid #d3d6db; border-radius: 2px; background: #fff; }
.toggle { width: 21.5px; height: 11px; border-radius: 6px; background: #cacdd3; margin-bottom: 4px; display: flex; align-items: center; padding: 0 1px; }
.toggle i { width: 9px; height: 9px; border-radius: 50%; background: #fff; }
.toggle.on { background: #3b37b5; justify-content: flex-end; }
.fit { margin: 5px 1px 0 0; color: #a5a6c4; }
.cursor { position: absolute; left: 805px; top: 112px; width: 10px; height: 14px; }

/* footer */
.footer { flex: none; height: 23px; background: #f7fafd; display: flex; align-items: center; color: #33363c; }
.f-list { margin-left: 4.5px; }
.f-grid { margin-left: 4px; }
.page-tab { width: 56px; height: 20px; margin: 0 6px 2px 8px; background: #6e7580; color: #fff; display: flex; align-items: center; padding: 1px 0 0 5px; justify-content: space-between; }
.page-tab svg { margin-right: -2px; }
.foot-right { margin-left: auto; display: flex; height: 100%; }
.seg { border-left: 1px solid #e4e7ec; display: flex; align-items: center; justify-content: center; }
.s-sel { width: 132px; justify-content: flex-start; padding-left: 3.5px; }
.s-sel span { width: 77.5px; margin-left: 1px; letter-spacing: 0; }
.s-sel b { width: 10px; height: 10px; border-radius: 50%; background: #d5d0fa; text-align: center; line-height: 10px; font-size: 7.4px; font-weight: 500; }
.sel-caret { margin-left: -1px; }
.s-icon { width: 22px; }
.s-zoom { width: 80px; }
.s-zoom span { width: 37px; text-align: center; }
.s-full { width: 27.5px; }
</style>
